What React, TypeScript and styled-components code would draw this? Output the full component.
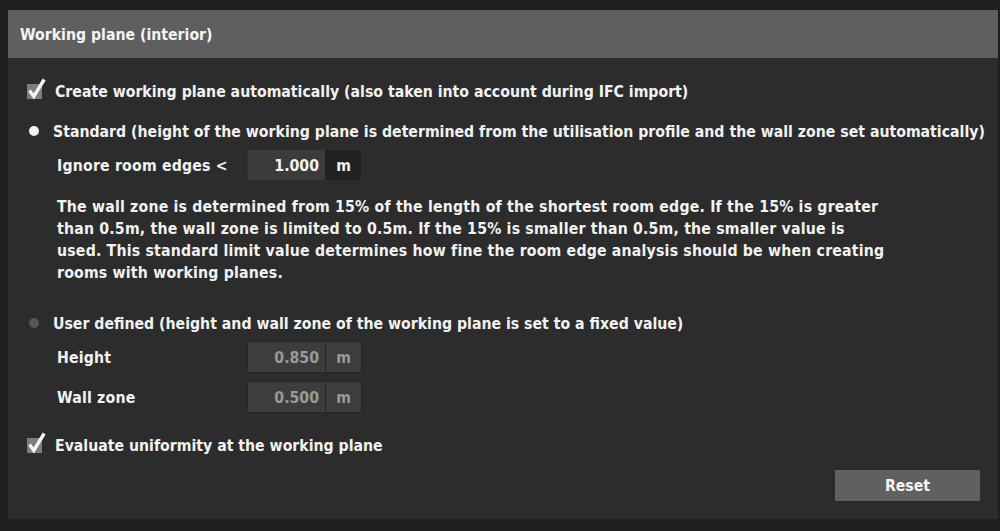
import styled, { createGlobalStyle } from 'styled-components'

const Global = createGlobalStyle`
  html, body {
    margin: 0;
    padding: 0;
    background: #1f1f1f;
  }
  body {
    font-family: "DejaVu Sans Condensed", "DejaVu Sans", sans-serif;
    font-weight: 700;
    font-size: 15.7px;
    color: #f2f2f2;
  }
`;

const Page = styled.div`
  width: 1000px;
  height: 531px;
  box-sizing: border-box;
  padding: 10px 2px 12px 8px;
  background: #1f1f1f;
`;

const Panel = styled.div`
  height: 100%;
  display: flex;
  flex-direction: column;
  background: #2c2c2c;
`;

const Header = styled.div`
  height: 48px;
  display: flex;
  align-items: center;
  padding-left: 12px;
  background: #5f5f5f;
  color: #f4f4f4;
`;

const Body = styled.div`
  flex: 1;
  display: flex;
  flex-direction: column;
  padding: 21px 18px 18px 19px;
`;

const OptionRow = styled.label<{ $mt?: number }>`
  display: flex;
  align-items: center;
  height: 24px;
  margin-top: ${p => p.$mt ?? 0}px;
  gap: 8px;
  white-space: nowrap;
`;

const RadioDot = styled.span<{ $on?: boolean }>`
  flex-shrink: 0;
  width: 10px;
  height: 10px;
  margin-left: 2px;
  margin-right: 6px;
  border-radius: 50%;
  background: ${p => (p.$on ? '#f4f4f4' : '#555555')};
`;

const FieldRow = styled.div<{ $mt?: number }>`
  display: flex;
  align-items: center;
  margin-top: ${p => p.$mt ?? 0}px;
  margin-left: 30px;
`;

const FieldLabel = styled.span`
  width: 190px;
  letter-spacing: 0.2px;
`;

const Field = styled.div<{ $disabled?: boolean }>`
  display: flex;
  height: 32px;
  border: 1px solid ${p => (p.$disabled ? '#262626' : '#2e2e2e')};
  box-sizing: border-box;
`;

const Value = styled.div<{ $disabled?: boolean }>`
  width: 77px;
  display: flex;
  align-items: center;
  justify-content: flex-end;
  padding-right: 6px;
  box-sizing: border-box;
  background: ${p => (p.$disabled ? '#3d3d3d' : '#3b3b3b')};
  color: ${p => (p.$disabled ? '#9a9a9a' : '#f4f4f4')};
`;

const Unit = styled.div<{ $disabled?: boolean }>`
  width: 35px;
  display: flex;
  align-items: center;
  justify-content: center;
  background: ${p => (p.$disabled ? '#3d3d3d' : '#222222')};
  border-left: 1px solid ${p => (p.$disabled ? '#272727' : '#222222')};
  color: ${p => (p.$disabled ? '#9a9a9a' : '#f4f4f4')};
`;

const Note = styled.p`
  margin: 15px 0 0 30px;
  line-height: 22px;
  letter-spacing: 0.2px;
  white-space: nowrap;
`;

const Footer = styled.div`
  display: flex;
  justify-content: flex-end;
  margin-top: 13px;
`;

const ResetButton = styled.button`
  width: 145px;
  height: 31px;
  border: none;
  background: #606060;
  color: #f4f4f4;
  font: inherit;
`;

const Check = () => (
  <svg width="20" height="22" viewBox="0 0 20 22" style={{ marginTop: -4, flexShrink: 0 }}>
    <rect x="0" y="6" width="15" height="15" fill="#7d7d7d" />
    <path d="M2.5 12.5 L6.8 18.5 L17.2 1.5" fill="none" stroke="#f4f4f4" strokeWidth="3.4" />
  </svg>
);

function Input({ value, disabled }: { value: string; disabled?: boolean }) {
  return (
    <Field $disabled={disabled}>
      <Value $disabled={disabled}>{value}</Value>
      <Unit $disabled={disabled}>m</Unit>
    </Field>
  );
}

export default function App() {
  return (
    <Page>
      <Global />
      <Panel>
        <Header>Working plane (interior)</Header>
        <Body>
          <OptionRow>
            <Check />
            Create working plane automatically (also taken into account during IFC import)
          </OptionRow>
          <OptionRow $mt={16}>
            <RadioDot $on />
            Standard (height of the working plane is determined from the utilisation profile and the wall zone set automatically)
          </OptionRow>
          <FieldRow $mt={6}>
            <FieldLabel>Ignore room edges &lt;</FieldLabel>
            <Input value="1.000" />
          </FieldRow>
          <Note>
            The wall zone is determined from 15% of the length of the shortest room edge. If the 15% is greater
            <br />
            than 0.5m, the wall zone is limited to 0.5m. If the 15% is smaller than 0.5m, the smaller value is
            <br />
            used. This standard limit value determines how fine the room edge analysis should be when creating
            <br />
            rooms with working planes.
          </Note>
          <OptionRow $mt={27}>
            <RadioDot />
            User defined (height and wall zone of the working plane is set to a fixed value)
          </OptionRow>
          <FieldRow $mt={6}>
            <FieldLabel>Height</FieldLabel>
            <Input value="0.850" disabled />
          </FieldRow>
          <FieldRow $mt={8}>
            <FieldLabel>Wall zone</FieldLabel>
            <Input value="0.500" disabled />
          </FieldRow>
          <OptionRow $mt={20}>
            <Check />
            Evaluate uniformity at the working plane
          </OptionRow>
          <Footer>
            <ResetButton>Reset</ResetButton>
          </Footer>
        </Body>
      </Panel>
    </Page>
  );
}
